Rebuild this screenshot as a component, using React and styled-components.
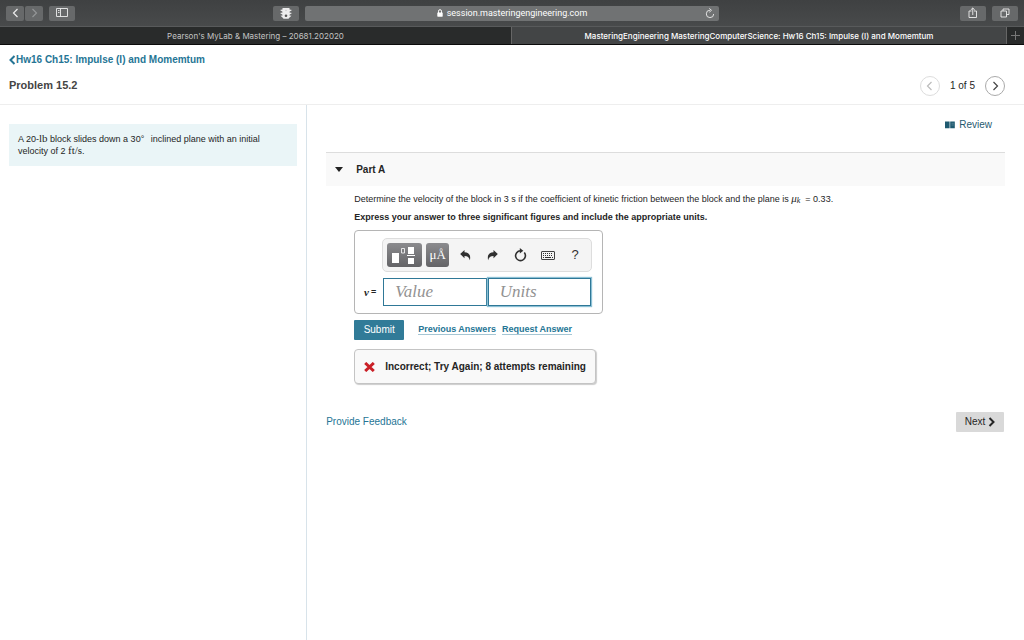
import React from 'react';
import styled, { createGlobalStyle } from 'styled-components';

const GlobalStyle = createGlobalStyle`
  *, *::before, *::after { box-sizing: border-box; }
  body {
    margin: 0;
    background: #fff;
    color: #252525;
    font: 9px/12px "Liberation Sans", Arial, sans-serif;
  }
  button, input { font: inherit; color: inherit; margin: 0; }
  button { border: 0; padding: 0; cursor: pointer; }
  p, h1, h2 { margin: 0; }
  svg { display: block; flex: none; }
`;

const Page = styled.div`
  display: flex;
  flex-direction: column;
  min-height: 100vh;
`;

/* Browser chrome */
const Chrome = styled.div`
  font-family: Inter, Roboto, sans-serif;
  color: #e6e6e6;
  background: #434546;
  border-bottom: 1px solid #0b0b0b;
`;

const BrowserBar = styled.div`
  display: grid;
  grid-template-columns: 1fr minmax(120px, 414px) 1fr;
  gap: 6px;
  align-items: center;
  height: 27px;
  padding: 0 6px;
  background: linear-gradient(#3f4142, #484a4b);
  border-bottom: 1px solid #585a5b;
`;

const BarSide = styled.div`
  display: flex;
  align-items: center;
  gap: ${(p) => p.$gap}px;
  justify-content: ${(p) => (p.$end ? 'flex-end' : 'flex-start')};
`;

const NavPair = styled.div`
  display: flex;
  gap: 1px;
`;

const BarButton = styled.button`
  display: flex;
  align-items: center;
  justify-content: center;
  width: ${(p) => (p.$narrow ? 18 : 26)}px;
  height: 15px;
  border-radius: 2px;
  color: ${(p) => (p.$dim ? '#949697' : '#ededed')};
  background: #67696a;
  margin-left: ${(p) => (p.$push ? 'auto' : '0')};
`;

const Address = styled.div`
  display: grid;
  grid-template-columns: 17px 1fr 17px;
  align-items: center;
  height: 15px;
  border-radius: 2px;
  background: #707273;
`;

const AddressText = styled.span`
  grid-column: 2;
  display: flex;
  align-items: center;
  justify-content: center;
  gap: 4px;
  color: #fff;
  font-family: Roboto, sans-serif;
  font-size: 9px;
`;

const ReloadButton = styled.button`
  display: flex;
  align-items: center;
  padding-left: 3px;
  color: #e2e2e2;
  background: none;
`;

const TabStrip = styled.div`
  display: flex;
  height: 17px;
  font-size: 8px;
`;

const Tab = styled.button`
  flex: ${(p) => (p.$active ? '0 1 495px' : '1 1 0')};
  font-weight: ${(p) => (p.$active ? 500 : 400)};
  color: ${(p) => (p.$active ? '#fff' : '#c4c4c4')};
  background: ${(p) => (p.$active ? '#434546' : '#292b2b')};
  border-left: ${(p) => (p.$active ? '1px solid #666' : '0')};
  white-space: nowrap;
`;

const NewTab = styled.button`
  display: flex;
  align-items: center;
  justify-content: center;
  width: 18px;
  color: #777;
  background: #292b2b;
  border-left: 1px solid #666;
`;

/* Page heading */
const Header = styled.header`
  display: flex;
  justify-content: space-between;
  align-items: flex-end;
  height: 60px;
  padding: 0 19px 8px 9px;
  border-bottom: 1px solid #eee;
`;

const Titles = styled.div`
  display: flex;
  flex-direction: column;
  gap: 12px;
  padding-bottom: 4px;
`;

const BackLink = styled.a`
  display: flex;
  align-items: center;
  font-size: 10px;
  font-weight: bold;
  color: #257595;
  text-decoration: none;
`;

const Title = styled.h1`
  font-size: 11px;
  line-height: 14px;
  color: #454545;
`;

const Pager = styled.nav`
  display: flex;
  align-items: center;
  gap: 10px;
  font-size: 10px;
`;

const PagerButton = styled.button`
  display: flex;
  align-items: center;
  justify-content: center;
  width: 20px;
  height: 20px;
  border: 1px solid ${(p) => (p.disabled ? '#ddd' : '#aaa')};
  border-radius: 50%;
  color: ${(p) => (p.disabled ? '#bbb' : '#444')};
  background: #fff;
`;

/* Columns */
const Columns = styled.div`
  display: flex;
  flex: 1;
`;

const Aside = styled.aside`
  flex: 0 0 30%;
  padding: 19px 9px;
  border-right: 1px solid #d8e3ea;
`;

const Statement = styled.p`
  min-height: 42px;
  padding: 9px;
  background: #eaf5f7;
`;

const MathText = styled.span`
  font-family: "Liberation Serif", "Times New Roman", serif;
  font-size: 11px;
  line-height: 1;
  font-style: ${(p) => (p.$italic ? 'italic' : 'normal')};

  sub { font-size: 8px; line-height: 0; vertical-align: -1px; }
`;

const Degree = styled.span`
  padding-right: 4px;
`;

const Main = styled.main`
  flex: 1;
  min-width: 0;
  padding: 14px 19px;
`;

const ReviewRow = styled.div`
  display: flex;
  justify-content: flex-end;
  padding-right: 13px;
  margin-bottom: 21px;
`;

const ReviewLink = styled.a`
  display: flex;
  align-items: center;
  gap: 4px;
  font-size: 10px;
  color: #1f5a70;
  text-decoration: none;
`;

const PartHeader = styled.button`
  display: flex;
  align-items: center;
  gap: 13px;
  width: 100%;
  height: 34px;
  padding: 0 9px;
  border-top: 1px solid #ddd;
  background: #f9f9f9;
  font-size: 10px;
  font-weight: bold;
`;

const PartBody = styled.div`
  display: flex;
  flex-direction: column;
  align-items: flex-start;
  gap: 6px;
  padding: 7px 28px 0;
`;

const Instruction = styled.p`
  font-weight: ${(p) => (p.$strong ? 'bold' : 'normal')};
`;

const AnswerBox = styled.div`
  display: grid;
  grid-template-columns: 27px 210px;
  row-gap: 6px;
  padding: 7px 10px 7px 0;
  margin-top: 1px;
  border: 1px solid #b5b5b5;
  border-radius: 4px;
`;

const MathToolbar = styled.div`
  grid-column: 2;
  display: flex;
  align-items: center;
  gap: 4px;
  height: 34px;
  padding: 0 4px;
  border: 1px solid #ddd;
  border-radius: 5px;
  background: #f4f4f4;
`;

const PaletteButton = styled.button`
  display: flex;
  align-items: center;
  justify-content: center;
  width: ${(p) => (p.$wide ? 35 : 23)}px;
  height: 24px;
  border-radius: 3px;
  color: #fff;
  background: linear-gradient(#8b8b8e, #646467);
  font-family: "Liberation Serif", "Times New Roman", serif;
  font-size: 13px;
`;

const ToolList = styled.div`
  display: flex;
  flex: 1;
  justify-content: space-between;
`;

const ToolButton = styled.button`
  display: flex;
  align-items: center;
  justify-content: center;
  width: 24px;
  height: 24px;
  color: #303030;
  background: none;
  font-size: 13px;
`;

const Variable = styled.label`
  display: flex;
  align-items: center;
  justify-content: flex-end;
  gap: 2px;
  padding-right: 6px;
  font-weight: bold;
`;

const Fields = styled.div`
  display: grid;
  grid-template-columns: 1fr 1fr;
  gap: 1px;
  padding: 0 1px;
`;

const Field = styled.input`
  width: 100%;
  height: 28px;
  padding: 0 11px;
  border: 1px solid #2f7897;
  box-shadow: ${(p) => (p.$focused ? '0 0 1px 1px #8cc0d5' : 'none')};
  outline: 0;
  background: #fff;
  font-family: "Liberation Serif", "Times New Roman", serif;
  font-size: 17px;
  font-style: italic;

  &::placeholder { color: #929292; opacity: 1; }
`;

const Actions = styled.div`
  display: flex;
  align-items: center;
  gap: 14px;
`;

const Submit = styled.button`
  width: 50px;
  height: 20px;
  border-radius: 1px;
  color: #fff;
  background: #317b98;
  font-size: 10px;
`;

const AnswerLinks = styled.div`
  display: flex;
  gap: 6px;
`;

const AnswerLink = styled.a`
  line-height: 9px;
  font-weight: bold;
  color: #257595;
  text-decoration: none;
  border-bottom: 1px solid #a5c6d4;
`;

const Result = styled.div`
  display: flex;
  align-items: center;
  gap: 10px;
  height: 35px;
  padding: 0 9px;
  margin-top: 3px;
  border: 1px solid #c4c4c4;
  border-radius: 4px;
  box-shadow: 1px 1px 1px #ccc;
  background: #f9f9f9;
  font-size: 10px;
  font-weight: bold;
`;

const Footer = styled.footer`
  display: flex;
  justify-content: space-between;
  align-items: center;
  margin-top: 28px;
  padding-right: 1px;
  font-size: 10px;
`;

const FeedbackLink = styled.a`
  color: #257595;
  text-decoration: none;
`;

const NextButton = styled.button`
  display: flex;
  align-items: center;
  justify-content: center;
  gap: 3px;
  width: 48px;
  height: 20px;
  border-radius: 1px;
  background: #d9d9d9;
`;

const Chevron = ({ left, size = 10, width = 1.2 }) => (
  <svg width={size * 0.7} height={size} viewBox="0 0 7 10" fill="none" stroke="currentColor" strokeWidth={width}>
    <path d={left ? 'M5.5 1 1.5 5l4 4' : 'M1.5 1l4 4-4 4'} />
  </svg>
);

const SidebarIcon = () => (
  <svg width="12" height="10" viewBox="0 0 12 10" fill="none" stroke="currentColor">
    <path d="M.5 .5h11v8H.5zM4.500 .5v8M2 2.500h1.500M2 4.500h1.500" strokeWidth=".9" />
  </svg>
);

const BlockerIcon = () => (
  <svg width="12" height="12" viewBox="0 0 12 12" fill="currentColor">
    <path d="M2.500 1h7v1.500L12 3l-2.500 1.800v.7L12 6 9.500 7.800v.7l2 .3-2 1.700-1 1.200h-5l-1-1.200-2-1.700 2-.3v-.7L0 6l2.500-.5v-.7L0 3l2.500-.5z" />
    <circle cx="6" cy="3.500" r=".8" fill="#ccc" />
    <circle cx="6" cy="8.700" r="1.300" fill="#555" />
  </svg>
);

const LockIcon = () => (
  <svg width="6" height="8" viewBox="0 0 6 8">
    <path d="M1.500 4V2.200a1.500 1.500 0 0 1 3 0V4" fill="none" stroke="currentColor" />
    <rect x=".3" y="3.400" width="5.400" height="4.300" rx=".6" fill="currentColor" />
  </svg>
);

const ReloadIcon = () => (
  <svg width="10" height="11" viewBox="0 0 10 11" fill="none" stroke="currentColor">
    <path d="M5 2.200A3.700 3.700 0 1 0 8.700 6M4.300.4l2.200 1.900-2.200 1.900" />
  </svg>
);

const ShareIcon = () => (
  <svg width="10" height="12" viewBox="0 0 10 12" fill="none" stroke="currentColor" strokeWidth=".9">
    <path d="M3.500 4H1v6.500h7.500V4H6M4.750 8V1M2.700 3l2.050-2L6.800 3" />
  </svg>
);

const TabsIcon = () => (
  <svg width="10" height="10" viewBox="0 0 10 10" fill="none" stroke="currentColor" strokeWidth=".9">
    <path d="M1 3h5.500v6H1zM3 3V1h6v5.500H6.500" />
  </svg>
);

const BookIcon = () => (
  <svg width="10" height="8" viewBox="0 0 10 8" fill="currentColor">
    <path d="M0 .5h4.600v6.700H0zM5.200.5h4.600v6.700H5.200z" />
    <path d="M6.500 2.300h2.300M6.500 4h2.300" stroke="#7aa1b0" strokeWidth=".5" />
  </svg>
);

const TemplateIcon = () => (
  <svg width="25" height="19" viewBox="0 0 25 19" fill="currentColor">
    <path d="M0 7h7v10H0zM16 1h6v7h-6zM15 9h8v1h-8zM16 12h6v6h-6z" />
    <path d="M9.500 2.500h3v4.500h-3z" fill="none" stroke="currentColor" strokeWidth=".8" />
  </svg>
);

const UndoIcon = ({ flip }) => (
  <svg width="11" height="11" viewBox="0 0 11 11" fill="currentColor">
    <path transform={flip ? 'matrix(-1 0 0 1 11 0)' : undefined} d="M4.500 0v2.200c4.200.1 6.500 2.500 5.400 8C9.300 7.500 7.500 6 4.500 6v2.300L.2 4.100z" />
  </svg>
);

const ResetIcon = () => (
  <svg width="13" height="14" viewBox="0 0 13 14" fill="none" stroke="currentColor" strokeWidth="1.600">
    <path d="M6.500 2.800a4.900 4.900 0 1 0 3.800 1.800" />
    <path d="M5.800 0 9.300 2.800 5.800 5.400z" fill="currentColor" stroke="none" />
  </svg>
);

const KeyboardIcon = () => (
  <svg width="14" height="9" viewBox="0 0 14 9" fill="none" stroke="currentColor">
    <rect x=".5" y=".5" width="13" height="8" rx=".5" strokeWidth=".9" />
    <path d="M2 2.500h10M2 4.500h10" strokeDasharray="1 1" />
    <path d="M2 6.500h1M4 6.500h6M11 6.500h1" />
  </svg>
);

const CrossIcon = () => (
  <svg width="11" height="10" viewBox="0 0 11 10" fill="none" stroke="#ca2027" strokeWidth="3">
    <path d="M1.200 1l8.600 8M9.800 1 1.200 9" />
  </svg>
);

export default function App() {
  return (
    <Page>
      <GlobalStyle />
      <Chrome>
        <BrowserBar>
          <BarSide $gap={6}>
            <NavPair>
              <BarButton $narrow aria-label="Back"><Chevron left /></BarButton>
              <BarButton $narrow $dim aria-label="Forward"><Chevron /></BarButton>
            </NavPair>
            <BarButton aria-label="Sidebar"><SidebarIcon /></BarButton>
            <BarButton $push aria-label="Content blocker"><BlockerIcon /></BarButton>
          </BarSide>
          <Address>
            <AddressText><LockIcon />session.masteringengineering.com</AddressText>
            <ReloadButton aria-label="Reload"><ReloadIcon /></ReloadButton>
          </Address>
          <BarSide $gap={6} $end>
            <BarButton aria-label="Share"><ShareIcon /></BarButton>
            <BarButton aria-label="Show tabs"><TabsIcon /></BarButton>
          </BarSide>
        </BrowserBar>
        <TabStrip>
          <Tab>Pearson's MyLab &amp; Mastering – 20681.202020</Tab>
          <Tab $active>MasteringEngineering MasteringComputerScience: Hw16 Ch15: Impulse (I) and Momemtum</Tab>
          <NewTab aria-label="New tab">
            <svg width="9" height="9" viewBox="0 0 9 9" stroke="currentColor"><path d="M4.500 0v9M0 4.500h9" /></svg>
          </NewTab>
        </TabStrip>
      </Chrome>

      <Header>
        <Titles>
          <BackLink href="#assignment"><Chevron left size={10} width={2} />Hw16 Ch15: Impulse (I) and Momemtum</BackLink>
          <Title>Problem 15.2</Title>
        </Titles>
        <Pager aria-label="Items">
          <PagerButton disabled aria-label="Previous item"><Chevron left /></PagerButton>
          <span>1 of 5</span>
          <PagerButton aria-label="Next item"><Chevron /></PagerButton>
        </Pager>
      </Header>

      <Columns>
        <Aside>
          <Statement>
            A 20-<MathText>lb</MathText> block slides down a 30<Degree>°</Degree> inclined plane with an initial velocity of 2 <MathText>ft/s</MathText>.
          </Statement>
        </Aside>
        <Main>
          <ReviewRow>
            <ReviewLink href="#review"><BookIcon />Review</ReviewLink>
          </ReviewRow>
          <PartHeader aria-expanded="true">
            <svg width="8" height="5" viewBox="0 0 8 5" fill="#222"><path d="M0 0h8L4 5z" /></svg>
            Part A
          </PartHeader>
          <PartBody>
            <Instruction>
              Determine the velocity of the block in 3 s if the coefficient of kinetic friction between the block and the plane is <MathText $italic>μ<sub>k</sub></MathText>&nbsp; = 0.33.
            </Instruction>
            <Instruction $strong>Express your answer to three significant figures and include the appropriate units.</Instruction>
            <AnswerBox>
              <MathToolbar role="toolbar" aria-label="Math tools">
                <PaletteButton $wide aria-label="Templates"><TemplateIcon /></PaletteButton>
                <PaletteButton>μÅ</PaletteButton>
                <ToolList>
                  <ToolButton aria-label="Undo"><UndoIcon /></ToolButton>
                  <ToolButton aria-label="Redo"><UndoIcon flip /></ToolButton>
                  <ToolButton aria-label="Reset"><ResetIcon /></ToolButton>
                  <ToolButton aria-label="Keyboard"><KeyboardIcon /></ToolButton>
                  <ToolButton>?</ToolButton>
                </ToolList>
              </MathToolbar>
              <Variable htmlFor="value"><MathText $italic>v</MathText>=</Variable>
              <Fields>
                <Field id="value" placeholder="Value" />
                <Field $focused aria-label="Units" placeholder="Units" />
              </Fields>
            </AnswerBox>
            <Actions>
              <Submit>Submit</Submit>
              <AnswerLinks>
                <AnswerLink href="#previous">Previous Answers</AnswerLink>
                <AnswerLink href="#request">Request Answer</AnswerLink>
              </AnswerLinks>
            </Actions>
            <Result role="status"><CrossIcon />Incorrect; Try Again; 8 attempts remaining</Result>
          </PartBody>
          <Footer>
            <FeedbackLink href="#feedback">Provide Feedback</FeedbackLink>
            <NextButton>Next <Chevron size={10} width={2} /></NextButton>
          </Footer>
        </Main>
      </Columns>
    </Page>
  );
}
